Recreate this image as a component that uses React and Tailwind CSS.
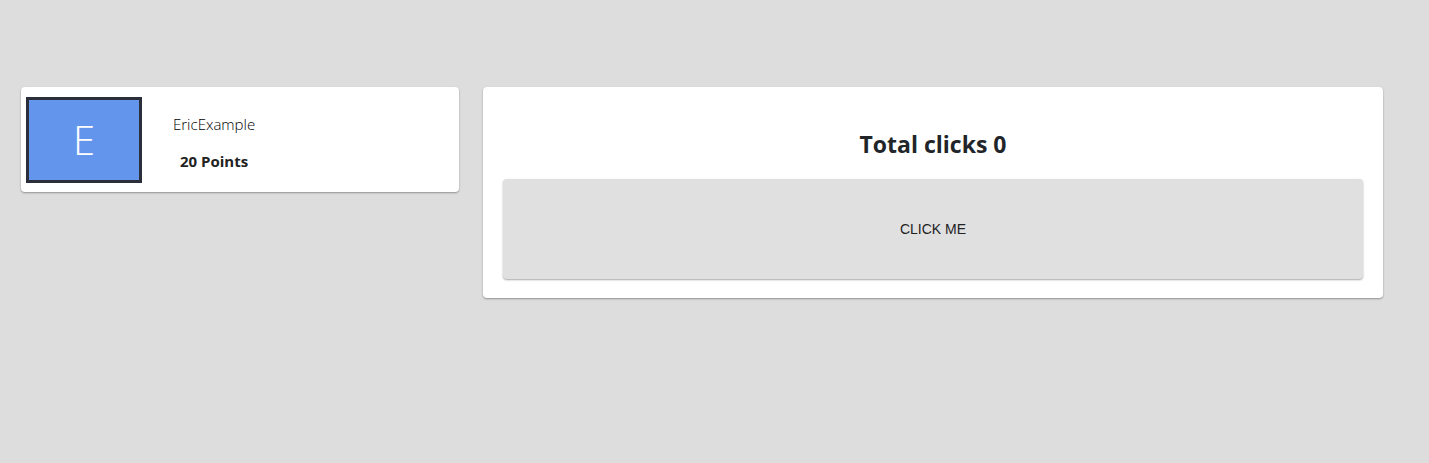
export default function App() {
    return (
        <div className="min-h-[463px] w-full bg-[#dddddd] pt-[87px] pl-[21px] font-['Open_Sans','Noto_Sans',sans-serif]">
            <div className="flex items-start gap-[24px]">
                {/* profile card */}
                <div className="flex w-[438px] items-start rounded-[4px] bg-white pt-[10px] pb-[9px] pl-[5px] shadow-[0_1px_2px_rgba(0,0,0,0.35)]">
                    <div className="flex h-[86px] w-[116px] items-center justify-center border-[3px] border-[#2a2f3b] bg-[#6495ed]">
                        <span className="text-[40px] font-light leading-none text-white">E</span>
                    </div>
                    <div className="ml-[31px] flex flex-col">
                        <span className="mt-[17px] text-[15px] font-light leading-[20px] text-black">EricExample</span>
                        <span className="mt-[16px] ml-[7px] text-[15px] font-bold leading-[22px] text-[#222]">20 Points</span>
                    </div>
                </div>

                {/* clicks card */}
                <div className="flex w-[900px] flex-col rounded-[4px] bg-white px-[20px] pt-[40px] pb-[19px] shadow-[0_1px_2px_rgba(0,0,0,0.35)]">
                    <h2 className="text-center text-[23px] font-bold leading-[34px] text-[#212529]">Total clicks 0</h2>
                    <button className="mt-[18px] h-[100px] w-full rounded-[4px] bg-[#e0e0e0] font-['Liberation_Sans',Arial,sans-serif] text-[14px] text-[#222] shadow-[0_1px_2px_rgba(0,0,0,0.35)]">
                        CLICK ME
                    </button>
                </div>
            </div>
        </div>
    );
}
